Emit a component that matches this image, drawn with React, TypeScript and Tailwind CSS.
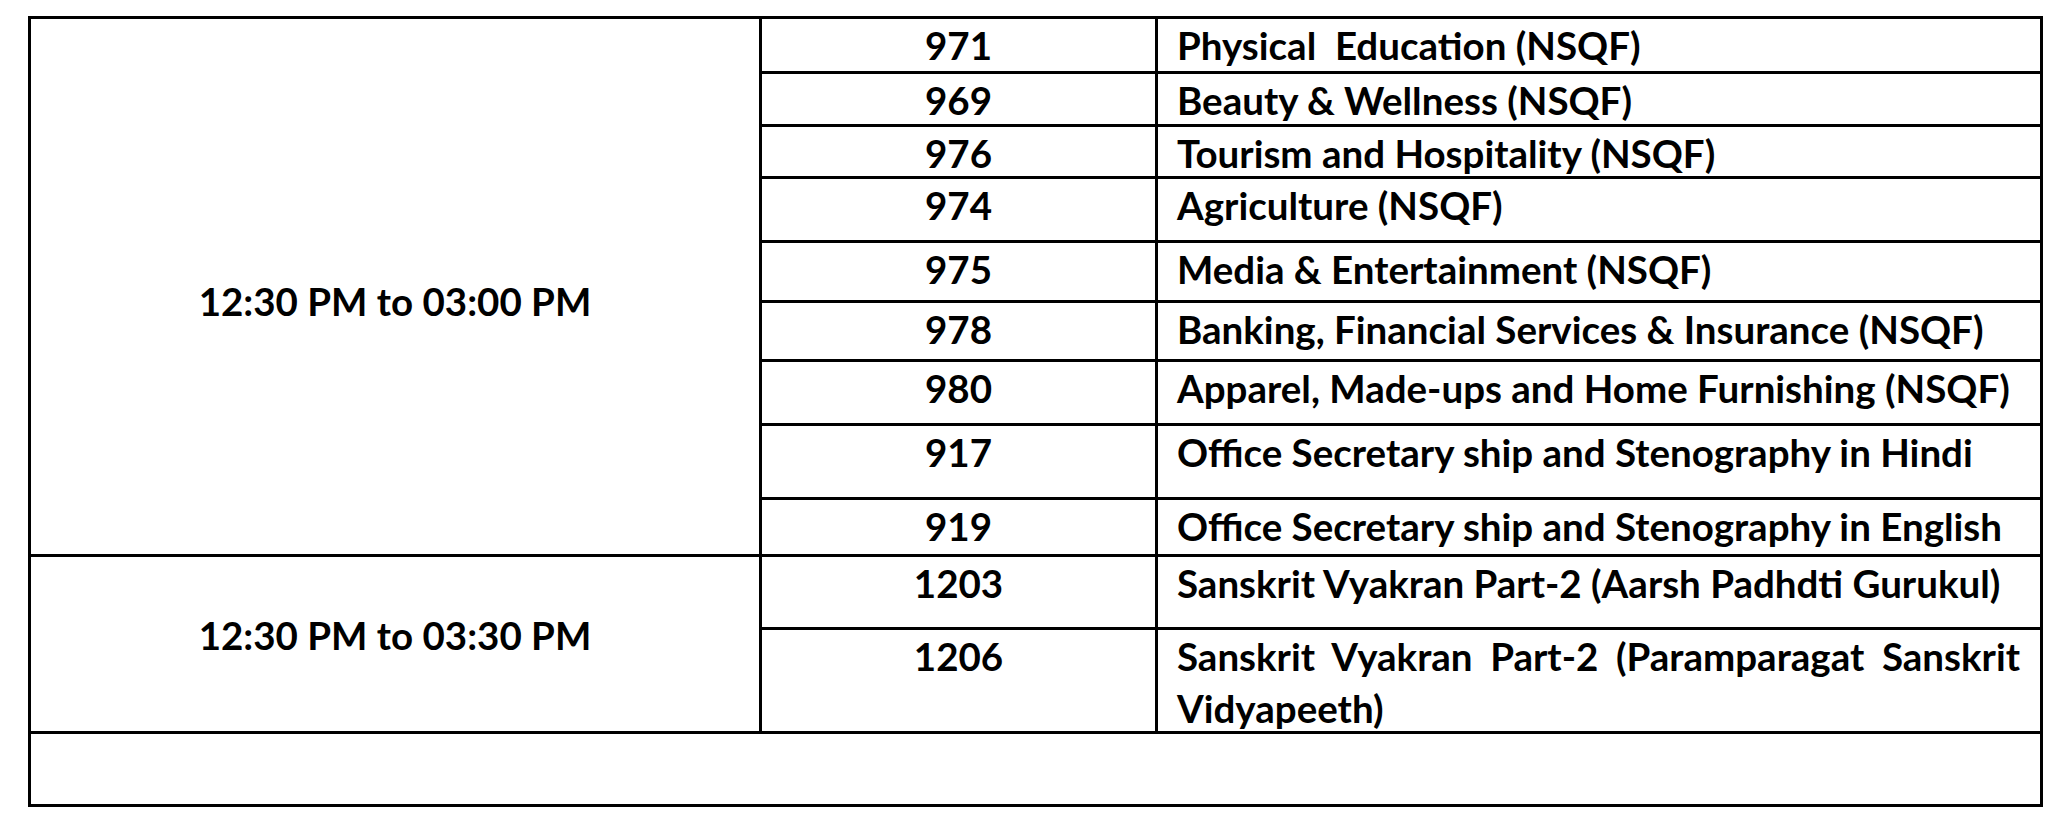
import React from "react";

// ─────────────────────────────────────────────────────────
// Data
// ─────────────────────────────────────────────────────────

type Row = { code: string; subject: string; justify?: boolean };

const FIRST_SLOT: Row[] = [
  { code: "971", subject: "Physical  Education (NSQF)" },
  { code: "969", subject: "Beauty & Wellness (NSQF)" },
  { code: "976", subject: "Tourism and Hospitality (NSQF)" },
  { code: "974", subject: "Agriculture (NSQF)" },
  { code: "975", subject: "Media & Entertainment (NSQF)" },
  { code: "978", subject: "Banking, Financial Services & Insurance (NSQF)" },
  { code: "980", subject: "Apparel, Made-ups and Home Furnishing (NSQF)" },
  { code: "917", subject: "Office Secretary ship and Stenography in Hindi" },
  { code: "919", subject: "Office Secretary ship and Stenography in English" },
];

const SECOND_SLOT: Row[] = [
  { code: "1203", subject: "Sanskrit Vyakran Part-2 (Aarsh Padhdti Gurukul)" },
  {
    code: "1206",
    subject: "Sanskrit Vyakran Part-2 (Paramparagat Sanskrit Vidyapeeth)",
    justify: true,
  },
];

function Cells({ row }: { row: Row }) {
  return (
    <>
      <div className="bg-white text-center">{row.code}</div>
      <div
        className={
          row.justify
            ? "bg-white pl-[19px] pr-[20px] text-justify"
            : "bg-white pl-[19px] whitespace-pre"
        }
      >
        {row.subject}
      </div>
    </>
  );
}

// ─────────────────────────────────────────────────────────
// Page
// ─────────────────────────────────────────────────────────

export default function App() {
  return (
    <div className="min-h-screen bg-white pt-[16px] pl-[28px]">
      <div className="grid w-[2015px] grid-cols-[728px_393px_882px] grid-rows-[52px_50px_49px_61px_57px_56px_61px_71px_54px_70px_101px_70px] gap-[3px] bg-black p-[3px] font-['Lato',sans-serif] text-[38.5px] leading-[52px] font-bold text-black">
        {/* 12:30 – 03:00 slot */}
        <div className="row-span-9 flex items-center justify-center bg-white pt-[28px]">
          12:30 PM to 03:00 PM
        </div>
        {FIRST_SLOT.map((row) => (
          <Cells key={row.code} row={row} />
        ))}

        {/* 12:30 – 03:30 slot */}
        <div className="row-span-2 flex items-center justify-center bg-white pb-[18px]">
          12:30 PM to 03:30 PM
        </div>
        {SECOND_SLOT.map((row) => (
          <Cells key={row.code} row={row} />
        ))}

        {/* empty trailing row */}
        <div className="col-span-3 bg-white" />
      </div>
    </div>
  );
}
